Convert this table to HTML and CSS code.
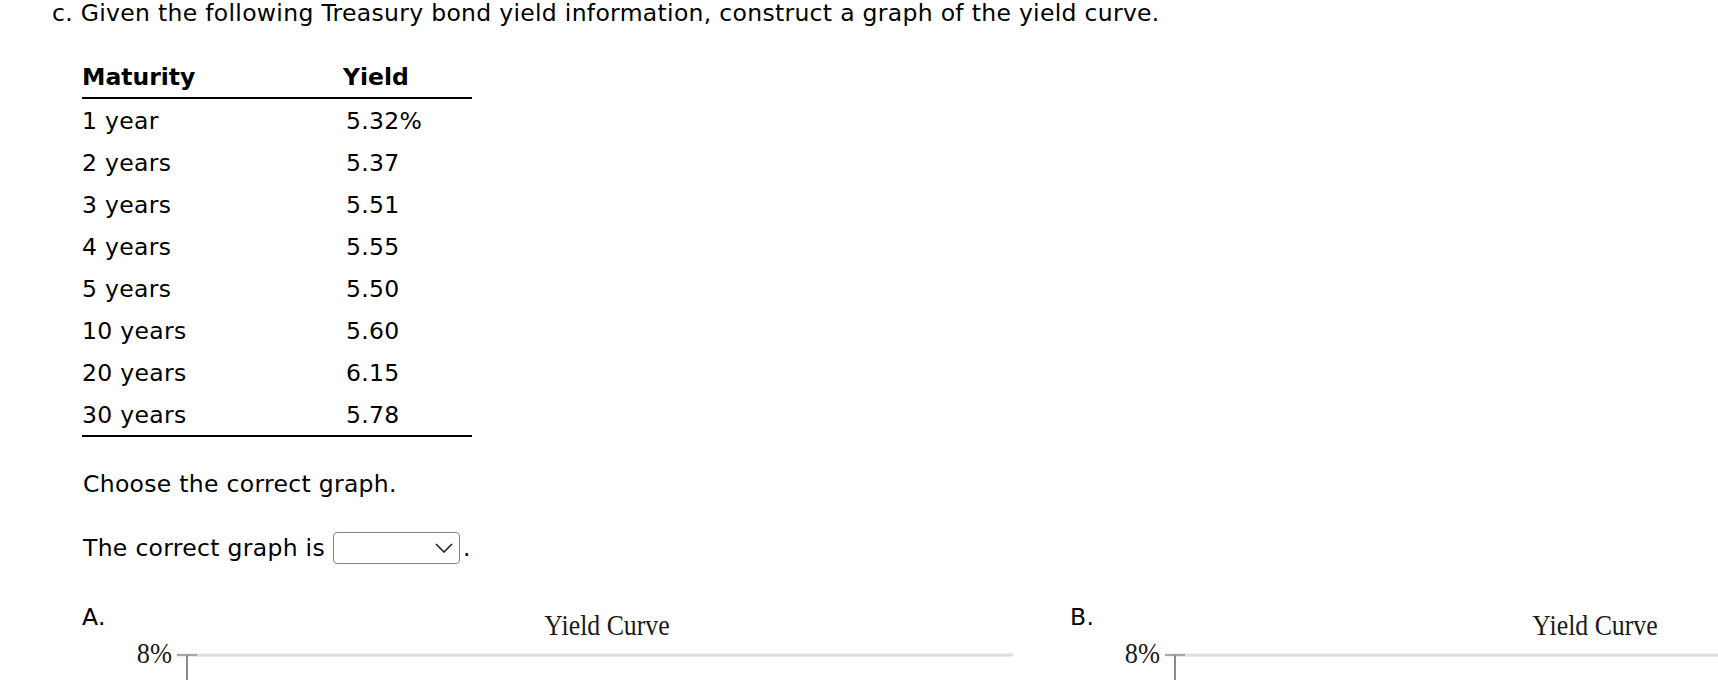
FILE: index.html
```html
<!DOCTYPE html>
<html>
<head>
<meta charset="utf-8">
<link rel="stylesheet" href="styles.css">
</head>
<body>
<div class="page">
  <p class="question">c. Given the following Treasury bond yield information, construct a graph of the yield curve.</p>
  <div class="content">
    <div class="yield-table">
      <div class="th">Maturity</div><div class="th th-yield">Yield</div>
      <div class="td">1 year</div><div class="td td-val">5.32%</div>
      <div class="td">2 years</div><div class="td td-val">5.37</div>
      <div class="td">3 years</div><div class="td td-val">5.51</div>
      <div class="td">4 years</div><div class="td td-val">5.55</div>
      <div class="td">5 years</div><div class="td td-val">5.50</div>
      <div class="td">10 years</div><div class="td td-val">5.60</div>
      <div class="td">20 years</div><div class="td td-val">6.15</div>
      <div class="td last">30 years</div><div class="td td-val last">5.78</div>
    </div>
    <p class="choose">Choose the correct graph.</p>
    <div class="prompt">
      <span>The correct graph is</span>
      <span class="select-wrap">
        <select class="answer" aria-label="answer"><option></option><option>A</option><option>B</option></select>
        <svg class="chev" width="18" height="10" viewBox="0 0 18 10"><path d="M1 1 L9 9 L17 1" fill="none" stroke="#222" stroke-width="1.6"/></svg>
      </span>
      <span class="dot">.</span>
    </div>
    <div class="options">
      <div class="option">
        <div class="opt-label">A.</div>
        <svg class="chart" width="950" height="80" viewBox="0 0 950 80">
          <line x1="57" y1="55" x2="893" y2="55" stroke="#dedede" stroke-width="3"/>
          <line x1="57" y1="55" x2="77" y2="55" stroke="#a8a8a8" stroke-width="2"/>
          <line x1="67" y1="55" x2="67" y2="80" stroke="#8a8a8a" stroke-width="2"/>
          <g transform="translate(487,35) scale(0.86,1)"><text class="ctitle" x="0" y="0" text-anchor="middle">Yield Curve</text></g>
          <g transform="translate(52,63) scale(0.88,1)"><text class="clabel" x="0" y="0" text-anchor="end">8%</text></g>
        </svg>
      </div>
      <div class="option">
        <div class="opt-label">B.</div>
        <svg class="chart" width="950" height="80" viewBox="0 0 950 80">
          <line x1="57" y1="55" x2="950" y2="55" stroke="#dedede" stroke-width="3"/>
          <line x1="57" y1="55" x2="77" y2="55" stroke="#a8a8a8" stroke-width="2"/>
          <line x1="67" y1="55" x2="67" y2="80" stroke="#8a8a8a" stroke-width="2"/>
          <g transform="translate(487,35) scale(0.86,1)"><text class="ctitle" x="0" y="0" text-anchor="middle">Yield Curve</text></g>
          <g transform="translate(52,63) scale(0.88,1)"><text class="clabel" x="0" y="0" text-anchor="end">8%</text></g>
        </svg>
      </div>
    </div>
  </div>
</div>
</body>
</html>
```
FILE: styles.css
```css
html, body {
  margin: 0;
  padding: 0;
  background: #fff;
  overflow: hidden;
}
body {
  font-family: "DejaVu Sans", Verdana, sans-serif;
  font-size: 23.5px;
  line-height: 23px;
  letter-spacing: 0.3px;
  color: #000;
}
.page {
  width: 1718px;
  height: 680px;
  overflow: hidden;
  padding-left: 52px;
  box-sizing: border-box;
}
.question {
  margin: 0;
  line-height: 27px;
  white-space: nowrap;
}
.content {
  margin-left: 30px;
}
.yield-table {
  margin-top: 39px;
  width: 390px;
  display: grid;
  grid-template-columns: 261px 129px;
}
.th {
  font-weight: bold;
  letter-spacing: 0;
  padding-bottom: 8px;
  border-bottom: 2px solid #000;
}
.td {
  padding-top: 11px;
  padding-bottom: 8px;
}
.td-val {
  padding-left: 3px;
}
.td.last {
  border-bottom: 2px solid #000;
}
.choose {
  margin: 36px 0 0 1px;
}
.prompt {
  margin-top: 36px;
  margin-left: 1px;
  display: flex;
  align-items: center;
  height: 32px;
}
.select-wrap {
  position: relative;
  display: inline-block;
  margin-left: 8px;
  width: 127px;
  height: 32px;
}
.answer {
  appearance: none;
  -webkit-appearance: none;
  width: 127px;
  height: 32px;
  border: 1px solid #838383;
  border-radius: 4px;
  background: #fff;
  margin: 0;
  padding: 0 6px;
  font: inherit;
}
.chev {
  position: absolute;
  left: 102px;
  top: 11px;
  pointer-events: none;
}
.dot {
  margin-left: 3px;
}
.options {
  margin-top: 42px;
  display: flex;
  width: 1976px;
}
.option {
  width: 988px;
  flex: none;
  display: flex;
  align-items: flex-start;
}
.opt-label {
  width: 38px;
  flex: none;
}
.chart {
  display: block;
  margin-top: -6px;
  flex: none;
}
.ctitle, .clabel {
  font-family: "Liberation Serif", "Times New Roman", serif;
  font-size: 30px;
  letter-spacing: 0;
  fill: #1a1a1a;
}
```
